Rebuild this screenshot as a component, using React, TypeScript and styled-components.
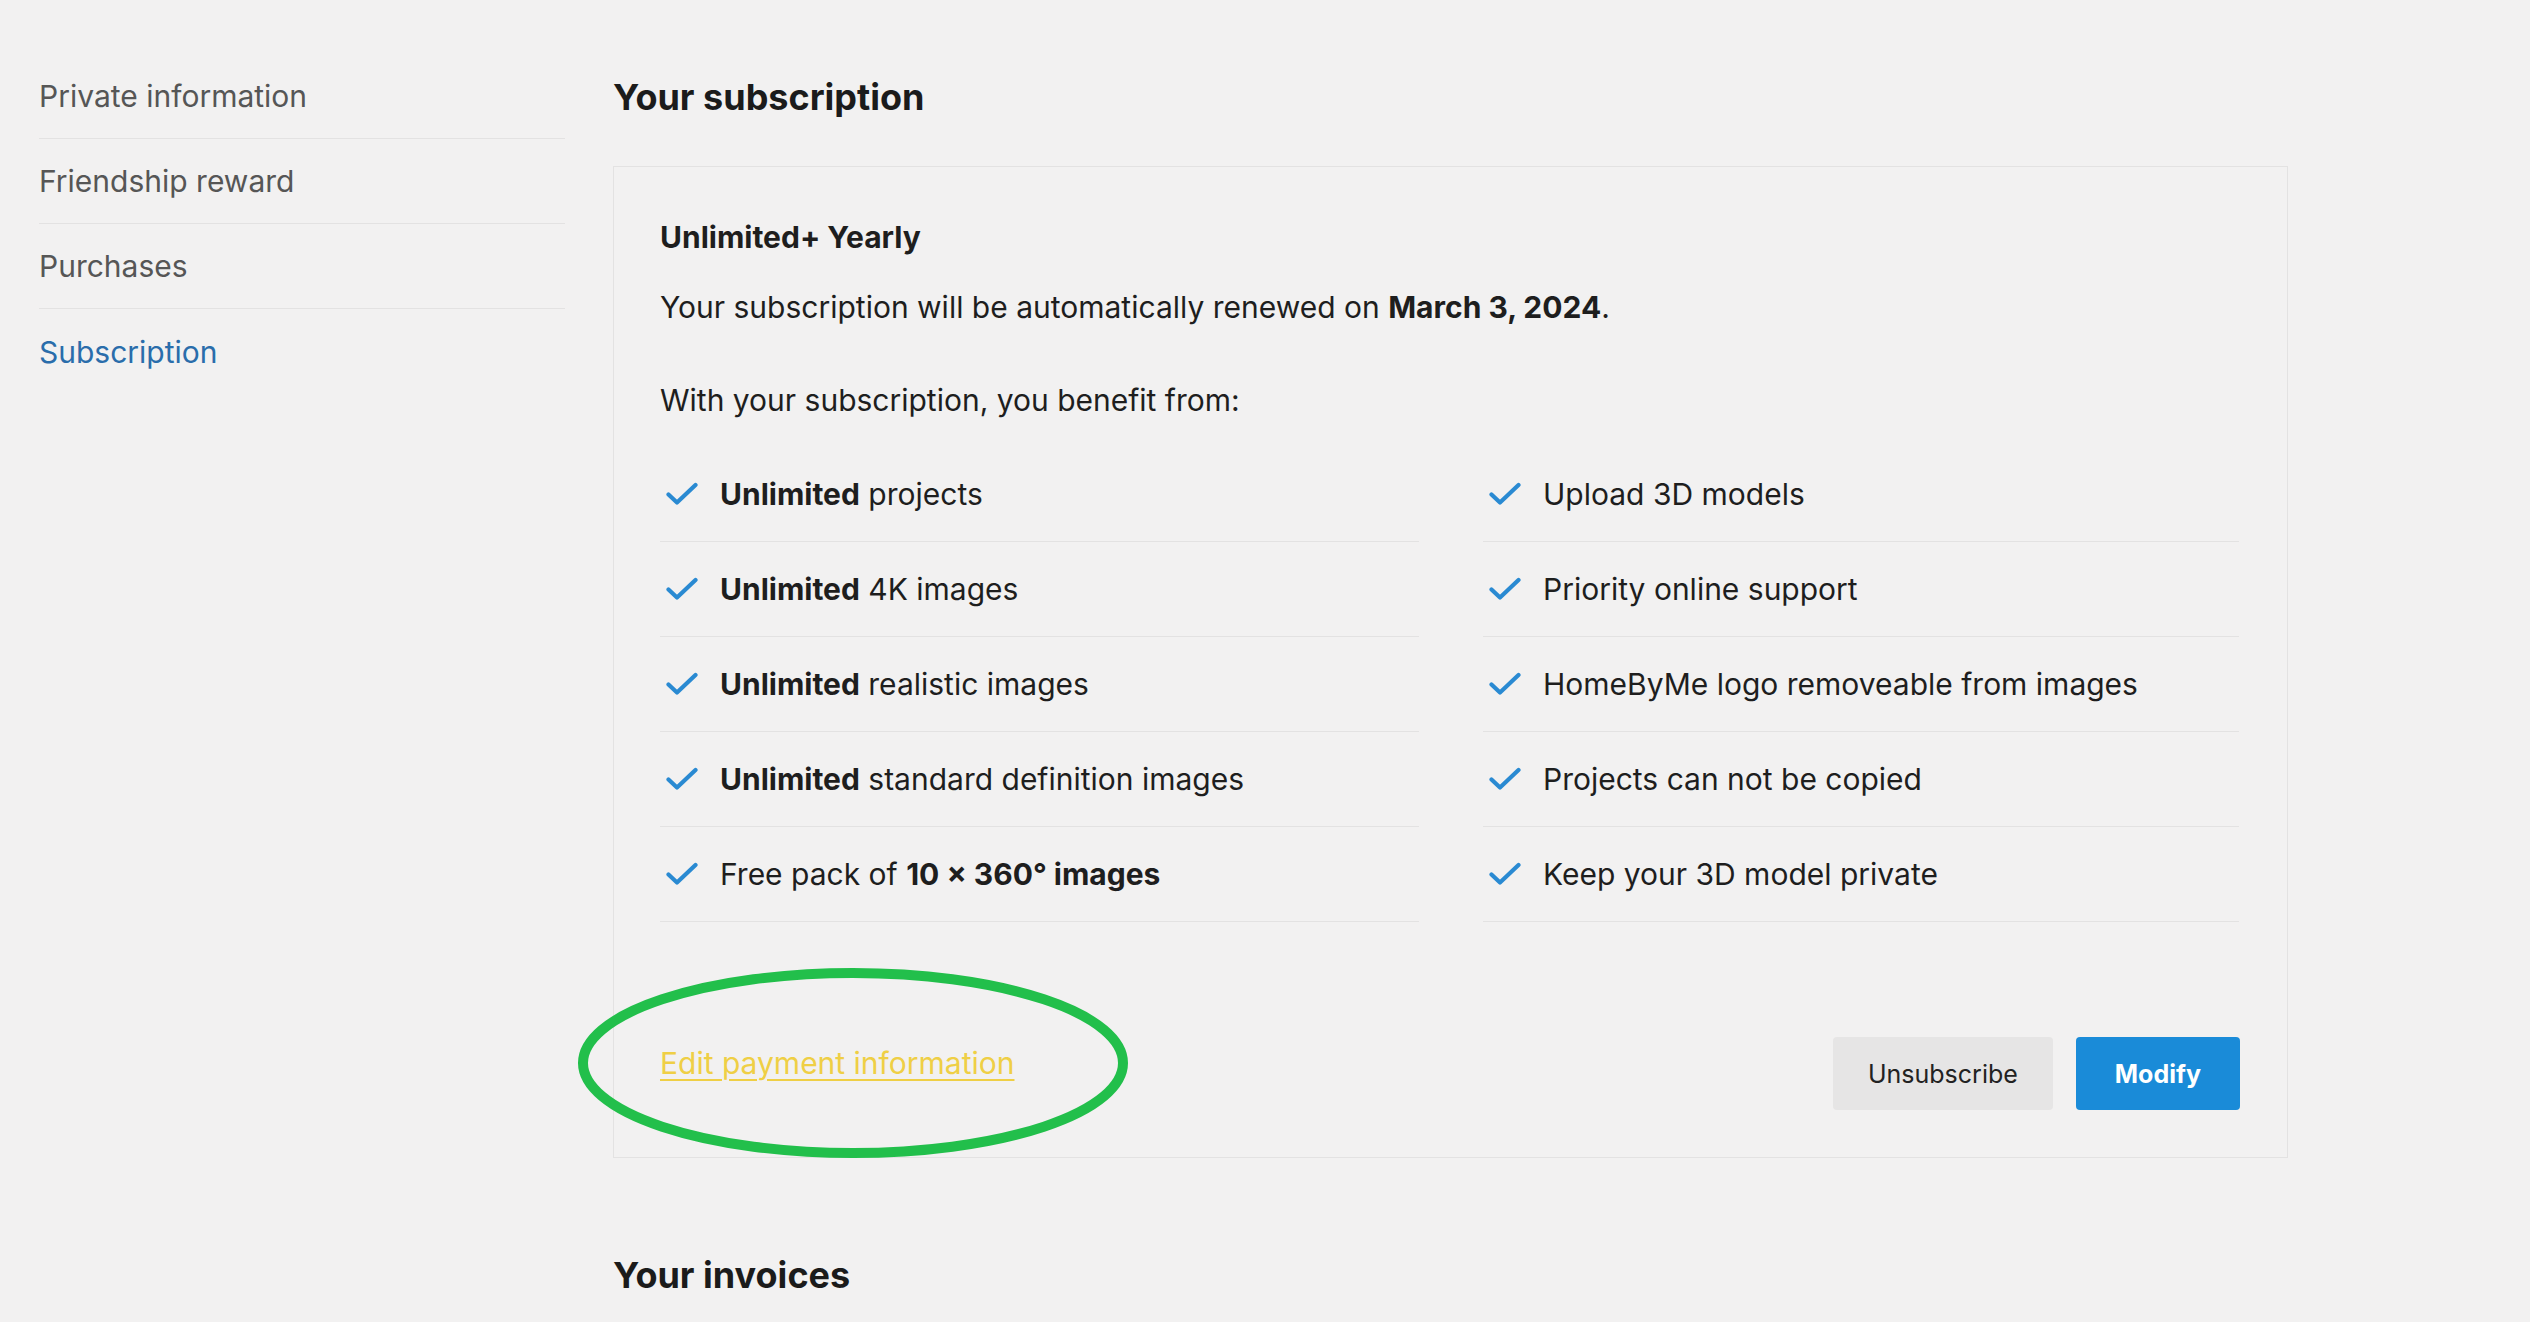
import styled, { createGlobalStyle } from 'styled-components';

const GlobalStyle = createGlobalStyle`
  body {
    margin: 0;
    background: #f2f1f1;
    font-family: Inter, "Noto Sans", sans-serif;
    color: #1e1e1e;
  }
`

const Page = styled.div`
  display: flex;
  align-items: flex-start;
  padding-left: 39px;
`

const Sidebar = styled.nav`
  width: 526px;
  padding-top: 54px;
  flex-shrink: 0;
`

const NavItem = styled.div<{ $active?: boolean; $last?: boolean }>`
  display: flex;
  align-items: center;
  height: 85px;
  box-sizing: border-box;
  font-size: 30px;
  color: ${(p) => (p.$active ? '#2a6dab' : '#565656')};
  border-bottom: ${(p) => (p.$last ? 'none' : '1px solid #e3e2e2')};
`

const Main = styled.main`
  width: 1675px;
  margin-left: 48px;
  padding-top: 75px;
  padding-bottom: 30px;
`

const SectionTitle = styled.h2<{ $spaced?: boolean }>`
  margin: ${(p) => (p.$spaced ? '95px 0 0' : '0')};
  font-size: 36px;
  line-height: 44px;
  font-weight: 700;
  color: #1b1b1b;
`

const Card = styled.section`
  margin-top: 47px;
  border: 1px solid #e3e2e2;
  padding: 50px 47px 47px 46px;
`

const PlanName = styled.div`
  font-size: 30px;
  line-height: 40px;
  font-weight: 700;
`

const Text = styled.p<{ $gap: number }>`
  margin: ${(p) => p.$gap}px 0 0;
  font-size: 30px;
  line-height: 40px;
`

const Benefits = styled.div`
  margin-top: 27px;
  display: grid;
  grid-template-columns: 759px 756px;
  column-gap: 64px;
`

const Column = styled.div`
  display: flex;
  flex-direction: column;
`

const Row = styled.div`
  display: flex;
  align-items: center;
  height: 95px;
  box-sizing: border-box;
  border-bottom: 1px solid #e3e2e2;
  font-size: 30px;
`

const Check = styled.svg`
  width: 32px;
  height: 24px;
  margin-left: 6px;
  margin-right: 22px;
  flex-shrink: 0;
`

const Footer = styled.div`
  margin-top: 115px;
  display: flex;
  align-items: center;
  justify-content: space-between;
`

const LinkWrap = styled.div`
  position: relative;
  margin-bottom: 22px;
`

const EditLink = styled.a`
  font-size: 30px;
  line-height: 40px;
  color: #efcf45;
  text-decoration: underline;
  text-underline-offset: 5px;
  text-decoration-thickness: 2px;
`

const Circle = styled.svg`
  position: absolute;
  left: -84px;
  top: -77px;
  width: 554px;
  height: 194px;
  pointer-events: none;
`

const Buttons = styled.div`
  display: flex;
  gap: 23px;
`

const Button = styled.button<{ $primary?: boolean }>`
  height: 73px;
  padding: ${(p) => (p.$primary ? '0 39px' : '0 35px')};
  border: none;
  border-radius: 4px;
  font-family: Inter, sans-serif;
  font-size: 25px;
  font-weight: ${(p) => (p.$primary ? 700 : 400)};
  background: ${(p) => (p.$primary ? '#1a8bd8' : '#e6e5e5')};
  color: ${(p) => (p.$primary ? '#ffffff' : '#222222')};
`

const CheckIcon = () => (
  <Check viewBox="0 0 32 24" fill="none">
    <path d="M2.5 12.5 L11 20.5 L29.5 3" stroke="#2a8ad2" strokeWidth="4.2" strokeLinecap="round" strokeLinejoin="round" />
  </Check>
)

const left = [
  <><b>Unlimited</b> projects</>,
  <><b>Unlimited</b> 4K images</>,
  <><b>Unlimited</b> realistic images</>,
  <><b>Unlimited</b> standard definition images</>,
  <>Free pack of <b>10 × 360° images</b></>,
]

const right = [
  'Upload 3D models',
  'Priority online support',
  'HomeByMe logo removeable from images',
  'Projects can not be copied',
  'Keep your 3D model private',
]

function App() {
  return (
    <>
      <GlobalStyle />
      <Page>
        <Sidebar>
          <NavItem>Private information</NavItem>
          <NavItem>Friendship reward</NavItem>
          <NavItem>Purchases</NavItem>
          <NavItem $active $last>Subscription</NavItem>
        </Sidebar>
        <Main>
          <SectionTitle>Your subscription</SectionTitle>
          <Card>
            <PlanName>Unlimited+ Yearly</PlanName>
            <Text $gap={30}>
              Your subscription will be automatically renewed on <b>March 3, 2024</b>.
            </Text>
            <Text $gap={53}>With your subscription, you benefit from:</Text>
            <Benefits>
              <Column>
                {left.map((item, i) => (
                  <Row key={i}>
                    <CheckIcon />
                    <span>{item}</span>
                  </Row>
                ))}
              </Column>
              <Column>
                {right.map((item) => (
                  <Row key={item}>
                    <CheckIcon />
                    <span>{item}</span>
                  </Row>
                ))}
              </Column>
            </Benefits>
            <Footer>
              <LinkWrap>
                <EditLink href="#">Edit payment information</EditLink>
                <Circle viewBox="0 0 554 194">
                  <ellipse cx="277" cy="97" rx="270" ry="90" fill="none" stroke="#22bf4b" strokeWidth="10" />
                </Circle>
              </LinkWrap>
              <Buttons>
                <Button>Unsubscribe</Button>
                <Button $primary>Modify</Button>
              </Buttons>
            </Footer>
          </Card>
          <SectionTitle $spaced>Your invoices</SectionTitle>
        </Main>
      </Page>
    </>
  )
}

export default App
